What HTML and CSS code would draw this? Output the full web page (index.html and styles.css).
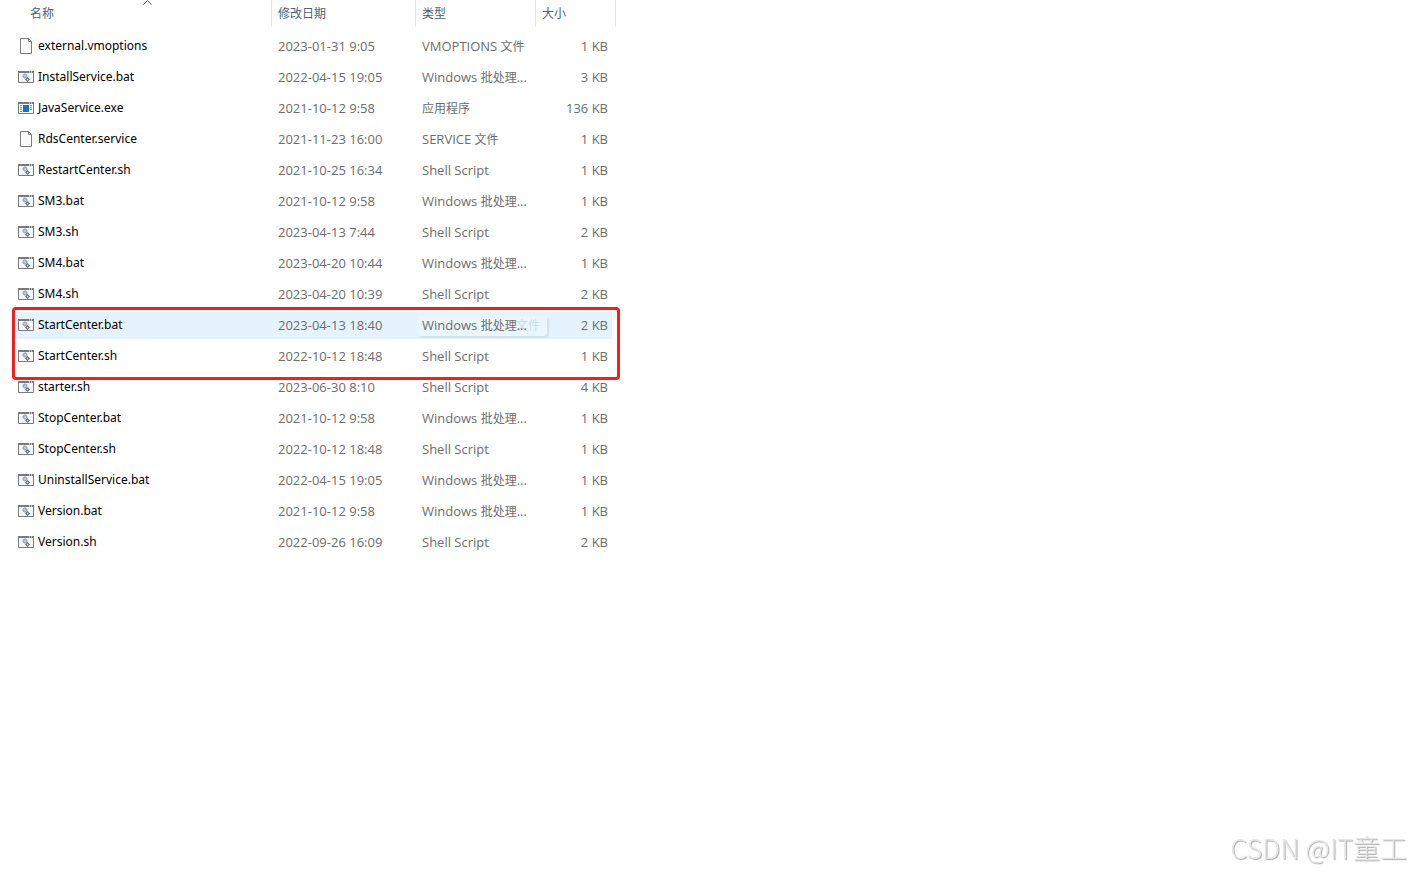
FILE: index.html
```html
<!DOCTYPE html>
<html lang="zh-CN">
<head>
  <meta charset="UTF-8">
  <title>bin</title>
  <link rel="stylesheet" href="styles.css">
</head>
<body>

  <svg class="symbols" aria-hidden="true">
    <symbol id="icon-file" viewBox="0 0 16 16">
      <path d="M2.5 .5h8l3 3v12h-11z" fill="#fafafa" stroke="#7a7a7a"/>
      <path d="M10.5 .5v3h3" fill="none" stroke="#7a7a7a"/>
    </symbol>
    <symbol id="icon-script" viewBox="0 0 16 16">
      <path d="M.5 2.5h15v11H.5z" fill="#f7f7f7" stroke="#7a7a7a"/>
      <path d="M0 2h16v2H0z" fill="#7a7a7a"/>
      <path d="M11 3h1M13 3h1" stroke="#fff"/>
      <circle cx="7" cy="7" r="1.6" fill="#e6ebf0" stroke="#a3adb7" stroke-width="1.6"/>
      <path d="M7 4.4v1M7 8.6v1M4.4 7h1M8.6 7h1" stroke="#a3adb7"/>
      <circle cx="9.5" cy="10.5" r="1.3" fill="#e6ebf0" stroke="#78828c" stroke-width="1.3"/>
      <path d="M9.5 8v1M9.5 12v1M7 10.5h1M11 10.5h1" stroke="#78828c"/>
    </symbol>
    <symbol id="icon-exe" viewBox="0 0 16 16">
      <path d="M.5 2.5h15v11H.5z" fill="#fff" stroke="#7a7a7a"/>
      <path d="M0 2h16v2H0z" fill="#7a7a7a"/>
      <path d="M11 3h1M13 3h1" stroke="#fff"/>
      <path d="M2 5.5h2M2 7.5h2M2 9.5h2M2 11.5h2M12 5.5h2M12 7.5h2M12 9.5h2" stroke="#8a8a8a"/>
      <path d="M5 5h6v7H5z" fill="#0a78d0"/>
    </symbol>
  </svg>

  <main class="explorer">
    <table class="files">
      <colgroup>
        <col class="col-name">
        <col class="col-date">
        <col class="col-type">
        <col class="col-size">
      </colgroup>
      <thead>
        <tr>
          <th aria-sort="ascending"><button class="sort sort-name">名称<svg class="arrow" viewBox="0 0 9 5"><path d="M.5 4.5l4-4 4 4" fill="none" stroke="#555"/></svg></button></th>
          <th><button class="sort">修改日期</button></th>
          <th><button class="sort">类型</button></th>
          <th><button class="sort">大小</button></th>
        </tr>
      </thead>
      <tbody id="fileList"></tbody>
    </table>
    <div class="marker"></div>
  </main>

  <div class="watermark">CSDN @IT童工</div>

  <script src="files.js"></script>
</body>
</html>
```
FILE: styles.css
```css
body {
  margin: 0;
  background-color: #fff;
  font-family: "Open Sans", "Noto Sans CJK SC", sans-serif;
  font-size: 13px;
  line-height: 20px;
  color: #6d6d6d;
}

.symbols {
  display: none;
}

.explorer {
  position: relative;
  width: max-content;
  padding-left: 15px;
}

.files {
  table-layout: fixed;
  width: 601px;
  border-spacing: 0;
}

.col-name {
  width: 257px;
}

.col-date {
  width: 144px;
}

.col-type {
  width: 120px;
}

.col-size {
  width: 80px;
}

th {
  height: 29px;
  padding: 0;
  vertical-align: top;
}

.sort {
  position: relative;
  display: block;
  width: 100%;
  height: 27px;
  padding: 0 6px 2px;
  border: none;
  border-right: 1px solid #e5e5e5;
  background: none;
  font-family: inherit;
  font-size: 12px;
  text-align: left;
  color: #4c607a;
}

.sort-name {
  padding-left: 15px;
}

.arrow {
  position: absolute;
  top: 0;
  left: 50%;
  width: 9px;
  height: 5px;
}

td {
  position: relative;
  z-index: 0;
  box-sizing: border-box;
  height: 31px;
  padding: 0 6px 2px;
  border-top: 4px solid #fff;
  background-clip: padding-box;
  white-space: nowrap;
}

td:first-child {
  padding-left: 3px;
}

td:last-child {
  padding-right: 4px;
  border-right: 4px solid #fff;
  text-align: right;
}

.selected td {
  background-color: #e5f3ff;
}

.selected td:last-child {
  z-index: -1;
}

.name {
  display: flex;
  align-items: center;
  gap: 4px;
  font-family: "Noto Sans", sans-serif;
  font-size: 12px;
  color: #000;
}

.icon {
  width: 16px;
  height: 16px;
}

.cjk {
  font-size: 12px;
  line-height: 12px;
}

/* tooltip of the truncated type, fading out behind the text */
.tooltip {
  position: absolute;
  z-index: -1;
  top: 4px;
  left: 1px;
  width: 123px;
  padding-right: 7px;
  border-radius: 3px;
  background-color: #ebf5fe;
  box-shadow: 2px 2px 2px rgba(0, 0, 0, 0.08);
  font-size: 12px;
  text-align: right;
  color: #cdd9e3;
}

.marker {
  position: absolute;
  top: 307px;
  left: 12px;
  right: -4px;
  height: 67px;
  border: 3px solid #fb1d15;
  border-radius: 4px;
}

.watermark {
  position: fixed;
  right: 4px;
  bottom: 8px;
  font-family: "Noto Sans CJK SC", sans-serif;
  font-size: 27px;
  font-weight: 300;
  line-height: 40px;
  color: #e6e6e6;
  text-shadow: 1px 1px 1px #aaa;
}
```
FILE: files.js
```javascript
const files = [
  ['file', 'external.vmoptions', '2023-01-31 9:05', 'VMOPTIONS 文件', 1],
  ['script', 'InstallService.bat', '2022-04-15 19:05', 'Windows 批处理...', 3],
  ['exe', 'JavaService.exe', '2021-10-12 9:58', '应用程序', 136],
  ['file', 'RdsCenter.service', '2021-11-23 16:00', 'SERVICE 文件', 1],
  ['script', 'RestartCenter.sh', '2021-10-25 16:34', 'Shell Script', 1],
  ['script', 'SM3.bat', '2021-10-12 9:58', 'Windows 批处理...', 1],
  ['script', 'SM3.sh', '2023-04-13 7:44', 'Shell Script', 2],
  ['script', 'SM4.bat', '2023-04-20 10:44', 'Windows 批处理...', 1],
  ['script', 'SM4.sh', '2023-04-20 10:39', 'Shell Script', 2],
  ['script', 'StartCenter.bat', '2023-04-13 18:40', 'Windows 批处理...', 2],
  ['script', 'StartCenter.sh', '2022-10-12 18:48', 'Shell Script', 1],
  ['script', 'starter.sh', '2023-06-30 8:10', 'Shell Script', 4],
  ['script', 'StopCenter.bat', '2021-10-12 9:58', 'Windows 批处理...', 1],
  ['script', 'StopCenter.sh', '2022-10-12 18:48', 'Shell Script', 1],
  ['script', 'UninstallService.bat', '2022-04-15 19:05', 'Windows 批处理...', 1],
  ['script', 'Version.bat', '2021-10-12 9:58', 'Windows 批处理...', 1],
  ['script', 'Version.sh', '2022-09-26 16:09', 'Shell Script', 2]
];

const selected = 'StartCenter.bat';
const tooltip = '<span class="tooltip">文件</span>';

document.getElementById('fileList').innerHTML = files.map(([icon, name, date, type, size]) => `
  <tr class="${name === selected ? 'selected' : ''}">
    <td><div class="name"><svg class="icon"><use href="#icon-${icon}"/></svg>${name}</div></td>
    <td>${date}</td>
    <td>${name === selected ? tooltip : ''}${type.replace(/[\u4e00-\u9fff]+/, '<span class="cjk">$&</span>')}</td>
    <td>${size} KB</td>
  </tr>`).join('');
```
